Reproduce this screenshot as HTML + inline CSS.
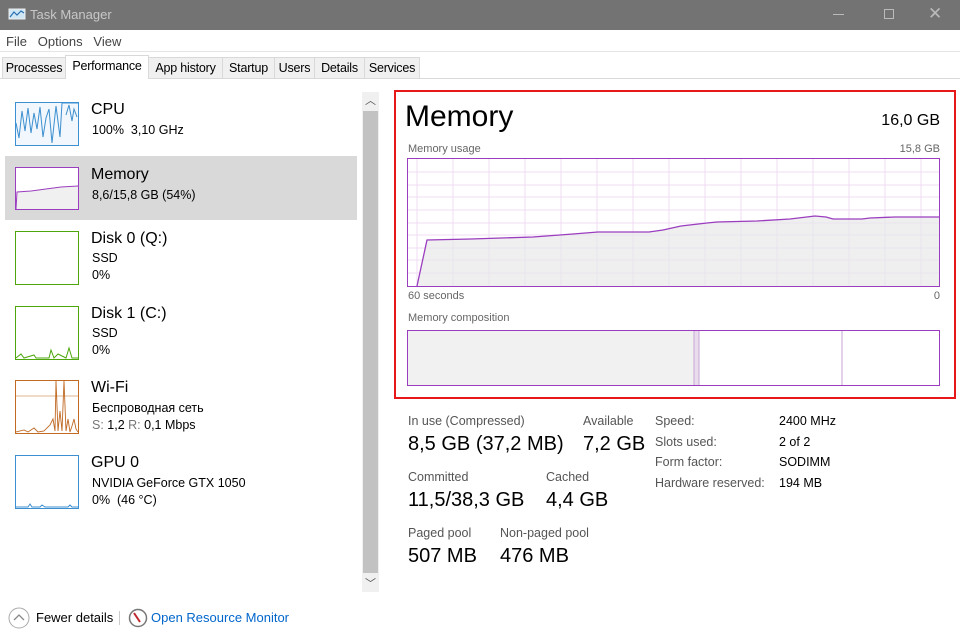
<!DOCTYPE html>
<html><head><meta charset="utf-8"><style>
*{margin:0;padding:0;box-sizing:border-box}
body{width:960px;height:640px;overflow:hidden;background:#fff;font-family:"Liberation Sans",sans-serif;color:#000;position:relative}
.a{position:absolute;white-space:nowrap}
.title{left:0;top:0;width:960px;height:30px;background:#737373}
.tab{position:absolute;top:57px;height:22px;border:1px solid #d9d9d9;background:#f0f0f0;font-size:12.5px;padding:3px 0 0;color:#000;white-space:nowrap;overflow:hidden;text-align:center;letter-spacing:-0.2px}
.thumb{position:absolute;left:15px;width:64px;border:1px solid}
.big{font-size:16px}
.sm{font-size:12.5px}
.lab{font-size:12.5px;color:#555}
.val{font-size:20px}
</style></head><body>
<div class="a title"></div>
<svg class="a" style="left:8px;top:8px" width="18" height="14"><rect x="1" y="1" width="16" height="10" fill="#cfe6f5" stroke="#eee"/><polyline points="2,9 6,4 9,7 13,3 16,5" fill="none" stroke="#2a6fb0" stroke-width="1.2"/></svg>
<div class="a" style="left:30px;top:7px;font-size:13px;color:#c8c8c8">Task Manager</div>
<div class="a" style="left:833px;top:14px;width:11px;height:1px;background:#bbb"></div>
<div class="a" style="left:884px;top:9px;width:10px;height:10px;border:1px solid #bbb"></div>
<div class="a" style="left:928px;top:4px;font-size:17px;color:#bbb">✕</div>
<div class="a" style="left:6px;top:34px;font-size:13px;color:#444">File&nbsp;&nbsp; Options&nbsp;&nbsp; View</div>
<div class="a" style="left:0;top:51px;width:960px;height:1px;background:#e5e5e5"></div>
<div class="a" style="left:0;top:78px;width:960px;height:1px;background:#d9d9d9"></div>
<div class="tab" style="left:2px;width:64px">Processes</div>
<div class="tab" style="left:65px;top:55px;height:24px;width:84px;background:#fff;border-bottom:none;padding-top:3px">Performance</div>
<div class="tab" style="left:148px;width:75px">App history</div>
<div class="tab" style="left:222px;width:53px">Startup</div>
<div class="tab" style="left:274px;width:41px">Users</div>
<div class="tab" style="left:314px;width:51px">Details</div>
<div class="tab" style="left:364px;width:56px">Services</div>

<!-- left list -->
<div class="a" style="left:5px;top:156px;width:352px;height:64px;background:#d9d9d9"></div>
<div class="thumb" style="top:102px;height:44px;border-color:#3c8fd0;background:#f1f7fc"><svg width="62" height="42"><polyline points="0,20 3,35 6,8 9,28 12,5 15,30 18,10 21,26 24,4 27,34 30,15 33,6 36,40 40,3 44,34 46,0 62,0" fill="none" stroke="#3c8fd0"/><polyline points="50,12 53,2 56,18 58,6 61,14" fill="none" stroke="#3c8fd0"/></svg></div>
<div class="a big" style="left:91px;top:101px">CPU</div>
<div class="a sm" style="left:92px;top:123px">100%&nbsp; 3,10 GHz</div>
<div class="thumb" style="top:167px;height:43px;border-color:#9b3dbf;background:#fff"><svg width="62" height="41"><polygon points="0,41 1,24 15,23 30,21 45,19 62,18 62,41" fill="#f0f0f0"/><polyline points="0,41 1,24 15,23 30,21 45,19 62,18" fill="none" stroke="#9b3dbf"/></svg></div>
<div class="a big" style="left:91px;top:166px">Memory</div>
<div class="a sm" style="left:92px;top:188px">8,6/15,8 GB (54%)</div>
<div class="thumb" style="top:231px;height:54px;border-color:#4da60c"></div>
<div class="a big" style="left:91px;top:230px">Disk 0 (Q:)</div>
<div class="a sm" style="left:92px;top:251px">SSD</div>
<div class="a sm" style="left:92px;top:268px">0%</div>
<div class="thumb" style="top:306px;height:54px;border-color:#4da60c"><svg width="62" height="52"><polyline points="0,51 5,47 8,51 18,48 20,51 33,51 35,43 38,51 42,47 46,49 50,51 53,41 56,51 62,51" fill="none" stroke="#4da60c"/></svg></div>
<div class="a big" style="left:91px;top:305px">Disk 1 (C:)</div>
<div class="a sm" style="left:92px;top:326px">SSD</div>
<div class="a sm" style="left:92px;top:343px">0%</div>
<div class="thumb" style="top:380px;height:54px;border-color:#c06a24"><svg width="62" height="52"><line x1="0" y1="15" x2="62" y2="15" stroke="#c06a24" stroke-width=".6"/><polyline points="0,51 8,49 12,51 18,47 22,51 28,50 34,44 37,38 39,50 40,0 42,50 44,30 46,50 48,0 50,50 52,38 54,51 56,45 58,38 60,48 62,51" fill="none" stroke="#c06a24" stroke-width=".9"/></svg></div>
<div class="a big" style="left:91px;top:379px">Wi-Fi</div>
<div class="a sm" style="left:92px;top:401px">Беспроводная сеть</div>
<div class="a sm" style="left:92px;top:418px"><span style="color:#777">S:</span> 1,2 <span style="color:#777">R:</span> 0,1 Mbps</div>
<div class="thumb" style="top:455px;height:54px;border-color:#3c8fd0"><svg width="62" height="52"><polyline points="0,51 12,51 14,48 16,51 24,51 26,49 29,51 52,51 54,49 56,51 62,51" fill="none" stroke="#3c8fd0"/></svg></div>
<div class="a big" style="left:91px;top:454px">GPU 0</div>
<div class="a sm" style="left:92px;top:476px">NVIDIA GeForce GTX 1050</div>
<div class="a sm" style="left:92px;top:493px">0%&nbsp; (46 °C)</div>
<!-- scrollbar -->
<div class="a" style="left:362px;top:92px;width:17px;height:500px;background:#f0f0f0"></div>
<div class="a" style="left:363px;top:111px;width:15px;height:462px;background:#c2c2c2"></div>
<div class="a" style="left:365px;top:92px;font-size:11px;color:#555">︿</div>
<div class="a" style="left:365px;top:575px;font-size:11px;color:#555">﹀</div>
<!-- footer -->
<svg class="a" style="left:8px;top:607px" width="22" height="22"><circle cx="11" cy="11" r="10" fill="none" stroke="#aaa"/><polyline points="6,13 11,8 16,13" fill="none" stroke="#888" stroke-width="1.3"/></svg>
<div class="a" style="left:36px;top:610px;font-size:13px">Fewer details</div>
<div class="a" style="left:119px;top:611px;width:1px;height:14px;background:#ccc"></div>
<svg class="a" style="left:128px;top:608px" width="20" height="20"><circle cx="10" cy="10" r="8.5" fill="#fff" stroke="#777" stroke-width="1.5"/><line x1="6" y1="5" x2="12" y2="14" stroke="#c0282d" stroke-width="2"/></svg>
<div class="a" style="left:151px;top:610px;font-size:13px;color:#0066cc">Open Resource Monitor</div>

<!-- right -->
<div class="a" style="left:394px;top:90px;width:562px;height:309px;border:2px solid #e81818"></div>
<div class="a" style="left:405px;top:100px;font-size:30px">Memory</div>
<div class="a" style="right:20px;top:112px;font-size:16px">16,0 GB</div>
<div class="a" style="left:408px;top:143px;font-size:11px;color:#666">Memory usage</div>
<div class="a" style="right:20px;top:143px;font-size:11px;color:#666">15,8 GB</div>
<svg class="a" style="left:407px;top:158px" width="533" height="129">
<g stroke="#efdcf4" stroke-width="1">
<line x1="10" y1="0" x2="10" y2="129"/><line x1="46" y1="0" x2="46" y2="129"/><line x1="82" y1="0" x2="82" y2="129"/><line x1="118" y1="0" x2="118" y2="129"/><line x1="154" y1="0" x2="154" y2="129"/><line x1="190" y1="0" x2="190" y2="129"/><line x1="226" y1="0" x2="226" y2="129"/><line x1="262" y1="0" x2="262" y2="129"/><line x1="298" y1="0" x2="298" y2="129"/><line x1="334" y1="0" x2="334" y2="129"/><line x1="370" y1="0" x2="370" y2="129"/><line x1="406" y1="0" x2="406" y2="129"/><line x1="442" y1="0" x2="442" y2="129"/><line x1="478" y1="0" x2="478" y2="129"/><line x1="514" y1="0" x2="514" y2="129"/>
<line x1="0" y1="14" x2="533" y2="14"/><line x1="0" y1="27" x2="533" y2="27"/><line x1="0" y1="39" x2="533" y2="39"/><line x1="0" y1="52" x2="533" y2="52"/><line x1="0" y1="65" x2="533" y2="65"/><line x1="0" y1="77" x2="533" y2="77"/><line x1="0" y1="90" x2="533" y2="90"/><line x1="0" y1="102" x2="533" y2="102"/><line x1="0" y1="115" x2="533" y2="115"/>
</g>
<polygon points="10,128 20,82 64,81 126,79 166,76 191,74 242,74 256,72 274,68 300,65 310,64 350,63 383,61 408,58 419,59 426,61 455,61 463,60 488,59 533,59 533,128" fill="#e8e8e8" fill-opacity=".7"/>
<polyline points="10,128 20,82 64,81 126,79 166,76 191,74 242,74 256,72 274,68 300,65 310,64 350,63 383,61 408,58 419,59 426,61 455,61 463,60 488,59 533,59" fill="none" stroke="#9b3dbf" stroke-width="1.3"/>
<rect x="0.5" y="0.5" width="532" height="128" fill="none" stroke="#9b3dbf"/>
</svg>
<div class="a" style="left:408px;top:290px;font-size:11px;color:#666">60 seconds</div>
<div class="a" style="right:20px;top:290px;font-size:11px;color:#666">0</div>
<div class="a" style="left:408px;top:312px;font-size:11px;color:#666">Memory composition</div>
<svg class="a" style="left:407px;top:330px" width="533" height="56">
<rect x="1" y="1" width="286" height="54" fill="#f1f1f1"/>
<rect x="287" y="1" width="5" height="54" fill="#e8dced"/>
<line x1="287" y1="0" x2="287" y2="56" stroke="#c9a6d6"/><line x1="292" y1="0" x2="292" y2="56" stroke="#c9a6d6"/>
<line x1="435" y1="0" x2="435" y2="56" stroke="#c9a6d6"/>
<rect x="0.5" y="0.5" width="532" height="55" fill="none" stroke="#9b3dbf"/>
</svg>
<!-- stats -->
<div class="a lab" style="left:408px;top:414px">In use (Compressed)</div>
<div class="a val" style="left:408px;top:433px">8,5 GB (37,2 MB)</div>
<div class="a lab" style="left:583px;top:414px">Available</div>
<div class="a val" style="left:583px;top:433px">7,2 GB</div>
<div class="a lab" style="left:408px;top:470px">Committed</div>
<div class="a val" style="left:408px;top:489px">11,5/38,3 GB</div>
<div class="a lab" style="left:546px;top:470px">Cached</div>
<div class="a val" style="left:546px;top:489px">4,4 GB</div>
<div class="a lab" style="left:408px;top:526px">Paged pool</div>
<div class="a val" style="left:408px;top:545px">507 MB</div>
<div class="a lab" style="left:500px;top:526px">Non-paged pool</div>
<div class="a val" style="left:500px;top:545px">476 MB</div>
<div class="a lab" style="left:655px;top:414px">Speed:</div><div class="a sm" style="left:779px;top:414px">2400 MHz</div>
<div class="a lab" style="left:655px;top:435px">Slots used:</div><div class="a sm" style="left:779px;top:435px">2 of 2</div>
<div class="a lab" style="left:655px;top:455px">Form factor:</div><div class="a sm" style="left:779px;top:455px">SODIMM</div>
<div class="a lab" style="left:655px;top:476px">Hardware reserved:</div><div class="a sm" style="left:779px;top:476px">194 MB</div>
</body></html>
